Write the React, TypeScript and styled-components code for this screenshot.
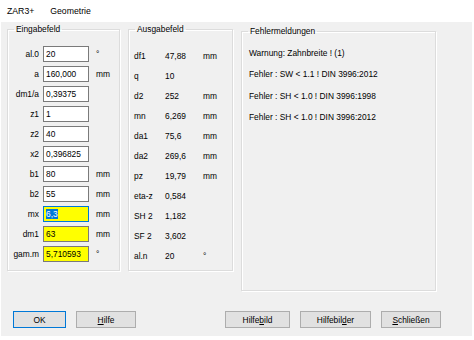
import { Fragment } from "react"
import styled, { createGlobalStyle } from "styled-components"

const GlobalStyle = createGlobalStyle`
    html, body {
        margin: 0;
        padding: 0;
        background: #ffffff;
    }
    body {
        font-family: "Liberation Sans", Arial, sans-serif;
        font-size: 8.4px;
        color: #000000;
    }
`

const Window = styled.div`
    width: 474px;
    height: 340px;
    display: flex;
    flex-direction: column;
    background: #ffffff;
    overflow: hidden;
`

const TitleBar = styled.div`
    height: 22px;
    display: flex;
    align-items: center;
    gap: 16px;
    padding-left: 7px;
    font-size: 8.7px;
`

const Body = styled.div`
    height: 314px;
    margin: 0 2px 0 1px;
    background: #f0f0f0;
    display: flex;
    flex-direction: column;
`

const GroupRow = styled.div`
    display: flex;
    align-items: flex-start;
    padding: 2px 0 0 6px;
`

const Group = styled.fieldset<{ $width: number; $height: number; $offset?: number }>`
    box-sizing: border-box;
    width: ${({ $width }) => $width}px;
    height: ${({ $height }) => $height}px;
    margin: ${({ $offset }) => $offset ?? 0}px 0 0 0;
    padding: 0;
    border: 1px solid #dcdcdc;
    box-shadow: inset 1px 1px 0 #ffffff, 1px 1px 0 #ffffff;
    min-width: 0;

    & + & {
        margin-left: 8px;
    }
`

const Legend = styled.legend`
    margin-left: 6px;
    padding: 0 2px;
    line-height: 10px;
    height: 10px;
`

const InputGrid = styled.div`
    display: grid;
    grid-template-columns: 31px 46px auto;
    column-gap: 4px;
    row-gap: 4px;
    padding: 12px 0 0 0;
    align-items: center;
`

const FieldLabel = styled.div`
    text-align: right;
    white-space: nowrap;
`

const TextBox = styled.div<{ $yellow?: boolean; $focused?: boolean }>`
    box-sizing: border-box;
    height: 16px;
    padding: 0 2px;
    display: flex;
    align-items: center;
    background: ${({ $yellow }) => ($yellow ? "#ffff00" : "#ffffff")};
    border: 1px solid ${({ $focused }) => ($focused ? "#0078d7" : "#7a7a7a")};
    white-space: nowrap;
    overflow: hidden;
`

const Selection = styled.span`
    background: #0078d7;
    color: #ffffff;
`

const Unit = styled.div`
    padding-left: 3px;
    white-space: nowrap;
`

const OutputGrid = styled.div`
    display: grid;
    grid-template-columns: 31px 38px auto;
    grid-auto-rows: 20px;
    padding: 12px 0 0 5px;
    align-items: center;
`

const Cell = styled.div`
    white-space: nowrap;
`

const MessageList = styled.div`
    display: flex;
    flex-direction: column;
    padding: 6px 0 0 7px;
`

const Message = styled.div`
    height: 21.5px;
    display: flex;
    align-items: center;
    white-space: nowrap;
`

const ButtonRow = styled.div`
    display: flex;
    align-items: center;
    margin-top: 20px;
    padding: 0 31px 0 12px;
    gap: 10px;
`

const Spacer = styled.div`
    flex: 1;
`

const Button = styled.button<{ $width: number; $default?: boolean }>`
    box-sizing: border-box;
    width: ${({ $width }) => $width}px;
    height: 17px;
    padding: 0;
    font-family: "Liberation Sans", Arial, sans-serif;
    font-size: 8.4px;
    color: #000000;
    background: #e1e1e1;
    border: 1px solid ${({ $default }) => ($default ? "#0078d7" : "#adadad")};
    border-radius: 0;
`

const Key = styled.span`
    text-decoration: underline;
`

const inputs = [
    { label: "al.0", value: "20", unit: "°" },
    { label: "a", value: "160,000", unit: "mm" },
    { label: "dm1/a", value: "0,39375", unit: "" },
    { label: "z1", value: "1", unit: "" },
    { label: "z2", value: "40", unit: "" },
    { label: "x2", value: "0,396825", unit: "" },
    { label: "b1", value: "80", unit: "mm" },
    { label: "b2", value: "55", unit: "mm" },
    { label: "mx", value: "6,3", unit: "mm", yellow: true, focused: true },
    { label: "dm1", value: "63", unit: "mm", yellow: true },
    { label: "gam.m", value: "5,710593", unit: "°", yellow: true },
]

const outputs = [
    ["df1", "47,88", "mm"],
    ["q", "10", ""],
    ["d2", "252", "mm"],
    ["mn", "6,269", "mm"],
    ["da1", "75,6", "mm"],
    ["da2", "269,6", "mm"],
    ["pz", "19,79", "mm"],
    ["eta-z", "0,584", ""],
    ["SH 2", "1,182", ""],
    ["SF 2", "3,602", ""],
    ["al.n", "20", "°"],
]

const messages = [
    "Warnung: Zahnbreite !  (1)",
    "Fehler : SW < 1.1 ! DIN 3996:2012",
    "Fehler : SH < 1.0 !  DIN 3996:1998",
    "Fehler : SH < 1.0 !  DIN 3996:2012",
]

export default function App() {
    return (
        <Window>
            <GlobalStyle />
            <TitleBar>
                <span>ZAR3+</span>
                <span>Geometrie</span>
            </TitleBar>
            <Body>
                <GroupRow>
                    <Group $width={113} $height={247}>
                        <Legend>Eingabefeld</Legend>
                        <InputGrid>
                            {inputs.map((f) => (
                                <Fragment key={f.label}>
                                    <FieldLabel>{f.label}</FieldLabel>
                                    <TextBox $yellow={f.yellow} $focused={f.focused}>
                                        {f.focused ? <Selection>{f.value}</Selection> : f.value}
                                    </TextBox>
                                    <Unit>{f.unit}</Unit>
                                </Fragment>
                            ))}
                        </InputGrid>
                    </Group>
                    <Group $width={105} $height={247}>
                        <Legend>Ausgabefeld</Legend>
                        <OutputGrid>
                            {outputs.map(([l, v, u]) => (
                                <Fragment key={l}>
                                    <Cell>{l}</Cell>
                                    <Cell>{v}</Cell>
                                    <Cell>{u}</Cell>
                                </Fragment>
                            ))}
                        </OutputGrid>
                    </Group>
                    <Group $width={195} $height={265} $offset={2}>
                        <Legend>Fehlermeldungen</Legend>
                        <MessageList>
                            {messages.map((m) => (
                                <Message key={m}>{m}</Message>
                            ))}
                        </MessageList>
                    </Group>
                </GroupRow>
                <ButtonRow>
                    <Button $width={53} $default>OK</Button>
                    <Button $width={60}><Key>H</Key>ilfe</Button>
                    <Spacer />
                    <Button $width={65}>Hilfe<Key>b</Key>ild</Button>
                    <Button $width={71}>Hilfebil<Key>d</Key>er</Button>
                    <Button $width={60}><Key>S</Key>chließen</Button>
                </ButtonRow>
            </Body>
        </Window>
    )
}
